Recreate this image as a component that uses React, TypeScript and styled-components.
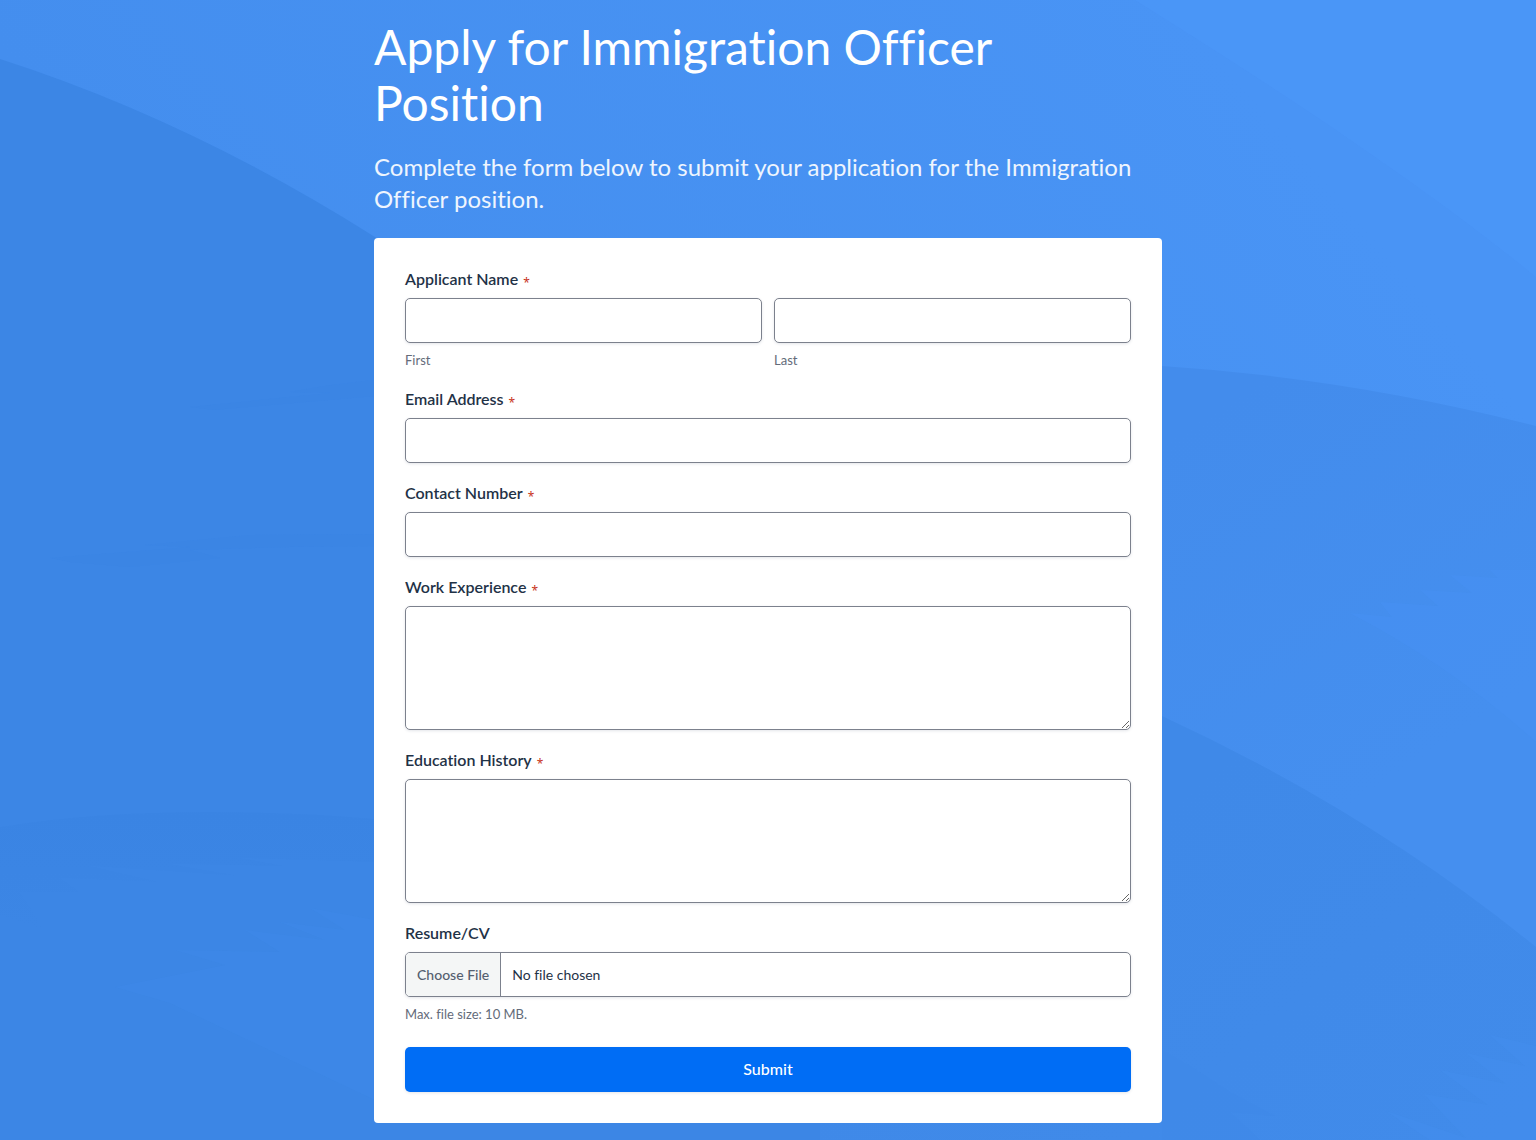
import React from "react";
import styled, { createGlobalStyle, css } from "styled-components";

const GlobalStyle = createGlobalStyle`
  *, *::before, *::after { box-sizing: border-box; }
  body {
    margin: 0;
    background: #3f89e9;
    font-family: Lato, "Open Sans", sans-serif;
    font-variant-ligatures: none;
    color: #1f3247;
  }
`;

const Page = styled.div`
  position: relative;
  min-height: 100vh;
  overflow: hidden;
`;

const Backdrop = styled.svg`
  position: absolute;
  inset: 0;
  width: 100%;
  height: 100%;
`;

const Main = styled.main`
  position: relative;
  max-width: 788px;
  margin: 0 auto;
  padding: 19px 0 17px;
`;

const Title = styled.h1`
  margin: 0 0 20px;
  font-size: 48px;
  line-height: 56px;
  font-weight: 400;
  color: #fff;
`;

const Intro = styled.p`
  margin: 0 0 23px;
  font-size: 24px;
  line-height: 32px;
  color: #eef5fe;
`;

const Card = styled.form`
  display: flex;
  flex-direction: column;
  gap: 20px;
  padding: 31px;
  border-radius: 4px;
  background: #fff;
`;

const Field = styled.div`
  display: flex;
  flex-direction: column;
`;

const Group = styled.fieldset`
  display: block;
  min-width: 0;
  margin: 0;
  padding: 0;
  border: 0;
`;

const labelText = css`
  display: block;
  margin-bottom: 9px;
  padding: 0;
  font-size: 16px;
  line-height: 20px;
  font-weight: 600;
`;

const Label = styled.label`
  ${labelText}
`;

const Legend = styled.legend`
  ${labelText}
`;

const Mark = styled.span`
  margin-left: 5px;
  font-family: "Noto Sans", sans-serif;
  font-size: 12px;
  line-height: 0;
  font-weight: 400;
  vertical-align: -2px;
  color: #c8331b;
`;

const Columns = styled.div`
  display: grid;
  grid-template-columns: 1fr 1fr;
  gap: 12px;
`;

const control = css`
  display: block;
  width: 100%;
  margin: 0;
  border: 1px solid #7c818d;
  border-radius: 5px;
  background: #fff;
  box-shadow: 0 1px 3px rgba(30, 50, 80, 0.12);
  font-family: inherit;
  font-variant-ligatures: inherit;
  color: #1f3247;
`;

const TextInput = styled.input`
  ${control}
  height: 45px;
  padding: 0 12px;
  font-size: 16px;
`;

const TextArea = styled.textarea`
  ${control}
  height: 124px;
  padding: 12px;
  font-size: 16px;
  resize: vertical;
`;

const FileInput = styled.input`
  ${control}
  height: 45px;
  overflow: hidden;
  font-size: 14px;
  line-height: 43px;

  &::file-selector-button {
    height: 43px;
    margin: 0 11px 0 0;
    padding: 0 11px;
    border: 0;
    border-right: 1px solid #7c818d;
    background: #f4f6f6;
    font: inherit;
    font-weight: 500;
    color: #556070;
  }
`;

const hintText = css`
  display: block;
  margin: 8px 0 0;
  font-size: 13px;
  line-height: 18px;
  color: #646b7a;
`;

const SubLabel = styled.label`
  ${hintText}
`;

const Hint = styled.p`
  ${hintText}
  margin-bottom: 4px;
`;

const Submit = styled.button`
  height: 45px;
  padding: 0 12px 2px;
  border: 0;
  border-radius: 5px;
  background: #006df5;
  box-shadow: 0 1px 3px rgba(30, 50, 80, 0.12);
  font-family: inherit;
  font-size: 16px;
  font-weight: 500;
  color: #fff;
`;

function Waves() {
  return (
    <Backdrop viewBox="0 0 1536 1140" preserveAspectRatio="none" aria-hidden="true">
      <defs>
        <linearGradient id="sky" gradientUnits="userSpaceOnUse" x1="300" y1="400" x2="1000" y2="-200">
          <stop offset="0" stopColor="#448eee" />
          <stop offset="1" stopColor="#4994f5" />
        </linearGradient>
        <linearGradient id="right" gradientUnits="userSpaceOnUse" x1="1200" y1="420" x2="1420" y2="760">
          <stop offset="0" stopColor="#438cec" />
          <stop offset="1" stopColor="#458fef" />
        </linearGradient>
        <linearGradient id="low" gradientUnits="userSpaceOnUse" x1="1200" y1="780" x2="1500" y2="1140">
          <stop offset="0" stopColor="#3f89e8" />
          <stop offset="1" stopColor="#418bea" />
        </linearGradient>
        <linearGradient id="leftLow" x1="0" y1="0" x2="0" y2="1">
          <stop offset="0" stopColor="#3a84e3" />
          <stop offset="1" stopColor="#3a84e3" stopOpacity="0" />
        </linearGradient>
      </defs>
      <rect width="1536" height="1140" fill="url(#sky)" />
      <path d="M1135 0C1280 90 1430 190 1536 277V0Z" fill="#4b96f7" opacity="0.8" />
      <path d="M768 366H1162Q1350 378 1536 426V1140H768Z" fill="url(#right)" />
      <path d="M1350 613L1392 617L1380 602L1438 606L1420 590L1472 593L1450 575L1498 578L1490 570H1536V742Q1450 665 1350 613Z" fill="#4690f1" opacity="0.8" />
      <path d="M768 560Q980 610 1162 716Q1370 812 1536 947V1140H768Z" fill="url(#low)" />
      <path d="M1386 1111L1466 1138L1424 1094L1488 1105L1440 1070L1506 1084L1466 1053L1525 1066L1490 1035L1536 1046V1140H1430Z" fill="#438dec" opacity="0.6" />
      <path d="M1162 1050L1190 1066L1230 1092L1275 1116L1230 1112L1260 1140H1162Z" fill="#3f88e8" opacity="0.6" />
      <path d="M0 59Q190 120 375 237L820 560V1140H0Z" fill="#3c86e5" />
      <path d="M375 380Q330 384 290 392L330 393L190 407L214 410L375 396Z" fill="#3b85e4" opacity="0.7" />
      <path d="M375 534L250 535L145 545L190 547L50 558L70 562L130 567L220 558L190 550L290 547L375 546Z" fill="#3b85e4" opacity="0.7" />
      <path d="M0 827Q90 812 210 812Q300 812 375 819V862L240 858L285 866L170 864L240 876L90 866L160 882L60 878L80 892L20 892L45 930L0 915Z" fill="url(#leftLow)" />
      <path d="M375 920L310 908L345 930L280 922L325 940L245 930L280 952L175 950L225 965L115 987L170 1003L375 1100Z" fill="#3d88e7" opacity="0.6" />
    </Backdrop>
  );
}

const Required = () => <Mark aria-hidden="true">*</Mark>;

export default function App() {
  return (
    <Page>
      <GlobalStyle />
      <Waves />
      <Main>
        <Title>Apply for Immigration Officer Position</Title>
        <Intro>
          Complete the form below to submit your application for the Immigration Officer position.
        </Intro>
        <Card onSubmit={(e: React.FormEvent) => e.preventDefault()}>
          <Group>
            <Legend>
              Applicant Name
              <Required />
            </Legend>
            <Columns>
              <Field>
                <TextInput id="first" type="text" required />
                <SubLabel htmlFor="first">First</SubLabel>
              </Field>
              <Field>
                <TextInput id="last" type="text" required />
                <SubLabel htmlFor="last">Last</SubLabel>
              </Field>
            </Columns>
          </Group>
          <Field>
            <Label htmlFor="email">
              Email Address
              <Required />
            </Label>
            <TextInput id="email" type="email" required />
          </Field>
          <Field>
            <Label htmlFor="phone">
              Contact Number
              <Required />
            </Label>
            <TextInput id="phone" type="tel" required />
          </Field>
          <Field>
            <Label htmlFor="work">
              Work Experience
              <Required />
            </Label>
            <TextArea id="work" required />
          </Field>
          <Field>
            <Label htmlFor="education">
              Education History
              <Required />
            </Label>
            <TextArea id="education" required />
          </Field>
          <Field>
            <Label htmlFor="resume">Resume/CV</Label>
            <FileInput id="resume" type="file" aria-describedby="resume-hint" />
            <Hint id="resume-hint">Max. file size: 10 MB.</Hint>
          </Field>
          <Submit type="submit">Submit</Submit>
        </Card>
      </Main>
    </Page>
  );
}
